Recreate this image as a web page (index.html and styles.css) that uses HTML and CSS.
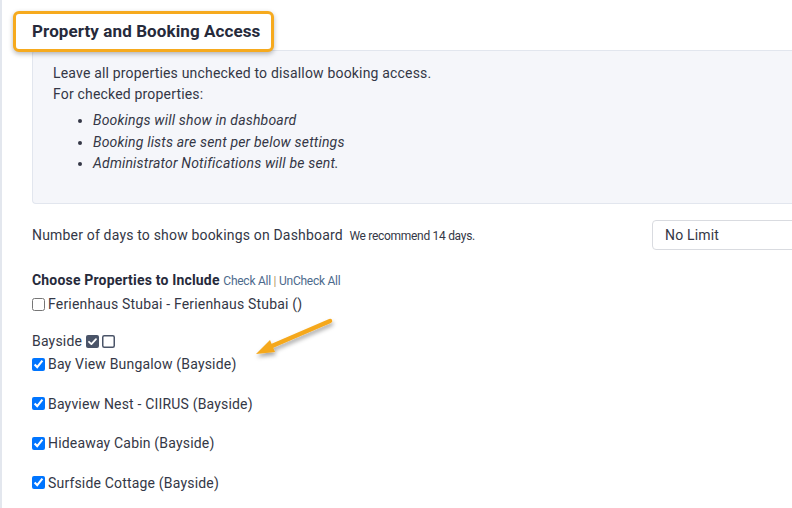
FILE: index.html
```html
<!DOCTYPE html>
<html>
<head>
<meta charset="utf-8">
<link rel="stylesheet" href="styles.css">
</head>
<body>
<div class="page">
  <div class="head-wrap">
    <h2 class="title">Property and Booking Access</h2>
  </div>
  <div class="info">
    <div class="line">Leave all properties unchecked to disallow booking access.</div>
    <div class="line">For checked properties:</div>
    <ul class="bullets">
      <li>Bookings will show in dashboard</li>
      <li>Booking lists are sent per below settings</li>
      <li>Administrator Notifications will be sent.</li>
    </ul>
  </div>
  <div class="days-row">
    <div class="days-label">Number of days to show bookings on Dashboard <span class="hint">We recommend 14 days.</span></div>
    <div class="select">No Limit</div>
  </div>
  <div class="choose"><b>Choose Properties to Include</b> <span class="links">Check All <span class="sep">|</span> UnCheck All</span></div>
  <label class="prop first"><input type="checkbox">Ferienhaus Stubai - Ferienhaus Stubai ()</label>
  <div class="group">Bayside
    <svg class="gicon" viewBox="0 0 13 13" width="13" height="13"><rect x="0" y="0" width="13" height="13" rx="2" fill="#4a5468"/><path d="M3 6.8 L5.4 9.1 L10 4.2" fill="none" stroke="#fff" stroke-width="1.8" stroke-linecap="round" stroke-linejoin="round"/></svg>
    <svg class="gicon" viewBox="0 0 13 13" width="13" height="13"><rect x="0.75" y="0.75" width="11.5" height="11.5" rx="1.5" fill="#fff" stroke="#4a5468" stroke-width="1.5"/></svg>
  </div>
  <label class="prop"><input type="checkbox" checked>Bay View Bungalow (Bayside)</label>
  <label class="prop"><input type="checkbox" checked>Bayview Nest - CIIRUS (Bayside)</label>
  <label class="prop"><input type="checkbox" checked>Hideaway Cabin (Bayside)</label>
  <label class="prop"><input type="checkbox" checked>Surfside Cottage (Bayside)</label>
</div>
<svg class="arrow" width="100" height="60" viewBox="0 0 100 60">
  <defs>
    <filter id="sh" x="-20%" y="-40%" width="160%" height="200%">
      <feDropShadow dx="1" dy="3" stdDeviation="2" flood-color="#000" flood-opacity="0.35"/>
    </filter>
  </defs>
  <g filter="url(#sh)">
    <path d="M80 10 L15 38" stroke="#f5a81c" stroke-width="4.5" stroke-linecap="round" fill="none"/>
    <path d="M6 43 L20 29 L25 41 Z" fill="#f5a81c"/>
  </g>
</svg>
</body>
</html>
```
FILE: styles.css
```css
html, body {
  margin: 0;
  padding: 0;
  background: #fff;
  overflow: hidden;
}
body {
  font-family: Roboto, "Liberation Sans", Arial, sans-serif;
  color: #343746;
  font-size: 14px;
  letter-spacing: 0.18px;
  width: 792px;
  height: 508px;
  position: relative;
}
.page {
  border-left: 2px solid #e3e7ee;
  height: 508px;
  box-sizing: border-box;
  padding-left: 30px;
}
.head-wrap {
  padding-top: 11px;
  margin-left: -19px;
  position: relative;
  z-index: 2;
  margin-bottom: -2px;
}
.title {
  display: inline-block;
  margin: 0;
  font-size: 17px;
  font-weight: 700;
  line-height: 20px;
  letter-spacing: 0.1px;
  color: #262a3b;
  border: 3px solid #f6aa1e;
  border-radius: 6px;
  padding: 7px 11px 8px 16px;
  background: #fff;
  box-shadow: 0 2px 5px rgba(0,0,0,0.28);
}
.info {
  background: #f5f6fa;
  border: 1px solid #e2e6ee;
  border-right: none;
  border-radius: 4px 0 0 4px;
  margin-right: -40px;
  padding: 12px 20px 14px 20px;
  height: 126px;
}
.line {
  line-height: 21px;
}
.bullets {
  margin: 5px 0 0 0;
  padding-left: 40px;
  font-style: italic;
}
.bullets li {
  line-height: 21.5px;
}
.bullets li:first-child {
  margin-top: 1px;
}
.days-row {
  display: grid;
  grid-template-columns: 620px 300px;
  align-items: center;
  margin-top: 16px;
}
.days-label {
  line-height: 20px;
}
.hint {
  font-size: 12px;
  margin-left: 3px;
  letter-spacing: -0.3px;
}
.select {
  border: 1px solid #d9dbe0;
  border-radius: 4px;
  height: 28px;
  line-height: 28px;
  padding-left: 12px;
  color: #343746;
}
.choose {
  margin-top: 20px;
  line-height: 20px;
}
.choose b {
  color: #262a3b;
}
.links {
  font-size: 12px;
  letter-spacing: -0.25px;
  color: #4c6a8c;
}
.sep {
  color: #b49a66;
}
.prop {
  display: flex;
  align-items: center;
  line-height: 20px;
  margin-bottom: 19.67px;
}
.prop.first {
  margin-top: 3px;
  margin-bottom: 17px;
}
.prop input {
  margin: 0 3px 0 0;
  width: 13px;
  height: 13px;
}
.group {
  display: flex;
  align-items: center;
  line-height: 20px;
  margin-bottom: 3px;
}
.gicon {
  margin-left: 4px;
}
.gicon + .gicon {
  margin-left: 3px;
}
.arrow {
  position: absolute;
  left: 250px;
  top: 311px;
}
```
